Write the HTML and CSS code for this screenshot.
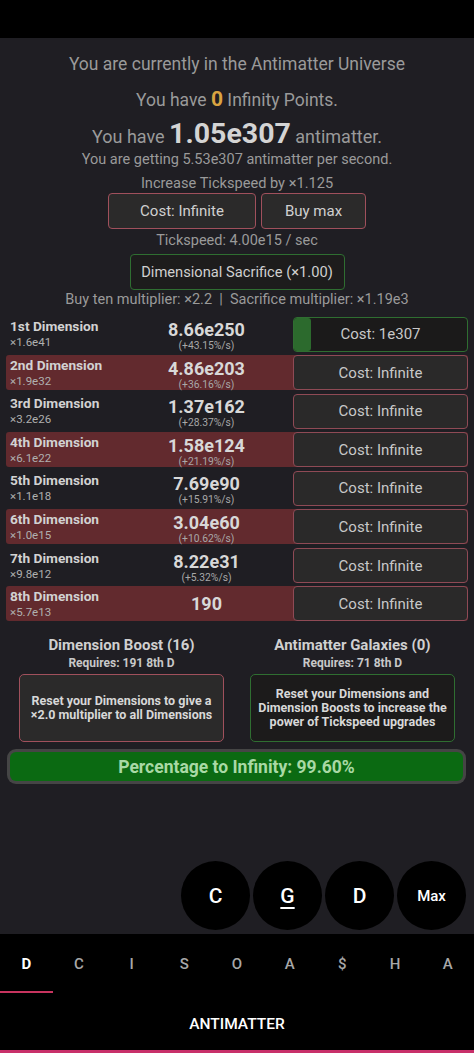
FILE: index.html
```html
<!DOCTYPE html>
<html>
<head>
<meta charset="utf-8">
<link rel="stylesheet" href="styles.css">
</head>
<body>
<div class="status"></div>
<div class="main">
  <div class="line l1">You are currently in the Antimatter Universe</div>
  <div class="line l2">You have <span class="ip">0</span> Infinity Points.</div>
  <div class="line l3">You have <span class="am">1.05e307</span> antimatter.</div>
  <div class="line l4">You are getting 5.53e307 antimatter per second.</div>
  <div class="line l5">Increase Tickspeed by ×1.125</div>
  <div class="tickrow">
    <div class="btn red-b cost">Cost: Infinite</div>
    <div class="btn red-b buymax">Buy max</div>
  </div>
  <div class="line l6">Tickspeed: 4.00e15 / sec</div>
  <div class="btn green-b sac">Dimensional Sacrifice (×1.00)</div>
  <div class="line l7">Buy ten multiplier: ×2.2 &nbsp;|&nbsp; Sacrifice multiplier: ×1.19e3</div>

  <div class="dims">
    <div class="dim">
      <div class="name"><div class="dname">1st Dimension</div><div class="dmult">×1.6e41</div></div>
      <div class="amt"><div class="anum">8.66e250</div><div class="apct">(+43.15%/s)</div></div>
      <div class="dbtn first"><span class="fill"></span>Cost: 1e307</div>
    </div>
    <div class="dim red">
      <div class="name"><div class="dname">2nd Dimension</div><div class="dmult">×1.9e32</div></div>
      <div class="amt"><div class="anum">4.86e203</div><div class="apct">(+36.16%/s)</div></div>
      <div class="dbtn">Cost: Infinite</div>
    </div>
    <div class="dim">
      <div class="name"><div class="dname">3rd Dimension</div><div class="dmult">×3.2e26</div></div>
      <div class="amt"><div class="anum">1.37e162</div><div class="apct">(+28.37%/s)</div></div>
      <div class="dbtn">Cost: Infinite</div>
    </div>
    <div class="dim red">
      <div class="name"><div class="dname">4th Dimension</div><div class="dmult">×6.1e22</div></div>
      <div class="amt"><div class="anum">1.58e124</div><div class="apct">(+21.19%/s)</div></div>
      <div class="dbtn">Cost: Infinite</div>
    </div>
    <div class="dim">
      <div class="name"><div class="dname">5th Dimension</div><div class="dmult">×1.1e18</div></div>
      <div class="amt"><div class="anum">7.69e90</div><div class="apct">(+15.91%/s)</div></div>
      <div class="dbtn">Cost: Infinite</div>
    </div>
    <div class="dim red">
      <div class="name"><div class="dname">6th Dimension</div><div class="dmult">×1.0e15</div></div>
      <div class="amt"><div class="anum">3.04e60</div><div class="apct">(+10.62%/s)</div></div>
      <div class="dbtn">Cost: Infinite</div>
    </div>
    <div class="dim">
      <div class="name"><div class="dname">7th Dimension</div><div class="dmult">×9.8e12</div></div>
      <div class="amt"><div class="anum">8.22e31</div><div class="apct">(+5.32%/s)</div></div>
      <div class="dbtn">Cost: Infinite</div>
    </div>
    <div class="dim red">
      <div class="name"><div class="dname">8th Dimension</div><div class="dmult">×5.7e13</div></div>
      <div class="amt single"><div class="anum">190</div></div>
      <div class="dbtn">Cost: Infinite</div>
    </div>
  </div>

  <div class="resets">
    <div class="rcol">
      <div class="rtitle">Dimension Boost (16)</div>
      <div class="rreq">Requires: 191 8th D</div>
      <div class="rbtn red-b">Reset your Dimensions to give a<br>×2.0 multiplier to all Dimensions</div>
    </div>
    <div class="rcol">
      <div class="rtitle">Antimatter Galaxies (0)</div>
      <div class="rreq">Requires: 71 8th D</div>
      <div class="rbtn green-b dark">Reset your Dimensions and<br>Dimension Boosts to increase the<br>power of Tickspeed upgrades</div>
    </div>
  </div>

  <div class="progress"><div class="pbar">Percentage to Infinity: 99.60%</div></div>

  <div class="rounds">
    <div class="round">C</div>
    <div class="round"><span class="ul">G</span></div>
    <div class="round">D</div>
    <div class="round small">Max</div>
  </div>
</div>
<div class="nav">
  <div class="tabs">
    <div class="tab active">D</div>
    <div class="tab">C</div>
    <div class="tab">I</div>
    <div class="tab">S</div>
    <div class="tab">O</div>
    <div class="tab">A</div>
    <div class="tab">$</div>
    <div class="tab">H</div>
    <div class="tab">A</div>
  </div>
  <div class="label">ANTIMATTER</div>
  <div class="pink"></div>
</div>
</body>
</html>
```
FILE: styles.css
```css
* { box-sizing: border-box; margin: 0; padding: 0; }
body {
  width: 474px;
  height: 1053px;
  background: #1f1e23;
  font-family: Roboto, "Noto Sans", sans-serif;
  color: #9a9a9a;
  overflow: hidden;
  display: flex;
  flex-direction: column;
}
.status { height: 38px; background: #000; flex: none; }
.main { flex: 1; display: flex; flex-direction: column; align-items: center; }
.line { text-align: center; white-space: nowrap; }
.l1 { margin-top: 14px; font-size: 17.5px; line-height: 24px; }
.l2 { margin-top: 11px; font-size: 17.5px; line-height: 24px; height: 24px; }
.ip { color: #d9a441; font-weight: 700; font-size: 21px; }
.l3 { margin-top: 7px; font-size: 18px; line-height: 32px; height: 32px; }
.am { font-size: 28.5px; font-weight: 700; color: #d4d4d4; }
.l4 { font-size: 14.5px; line-height: 20px; }
.l5 { margin-top: 3px; font-size: 14.6px; line-height: 20px; }
.l6 { margin-top: 2px; font-size: 14.5px; line-height: 20px; }
.l7 { margin-top: 1px; font-size: 14.5px; line-height: 18px; }

.btn {
  background: #2b2a2a;
  border: 1px solid #a0505c;
  border-radius: 4px;
  color: #d0d0d0;
  font-size: 15px;
  display: flex;
  align-items: center;
  justify-content: center;
}
.red-b { border-color: #a0505c; }
.green-b { border-color: #2f6e31; }
.tickrow { display: flex; gap: 5px; height: 36px; }
.cost { width: 148px; }
.buymax { width: 105px; }
.sac { margin-top: 3px; width: 215px; height: 36px; background: #1d1c1c; font-size: 14.7px; }

.dims {
  align-self: stretch;
  margin: 7px 6px 0;
  display: flex;
  flex-direction: column;
  gap: 3.6px;
}
.dim {
  height: 35px;
  display: grid;
  grid-template-columns: 114px 173px 175px;
  align-items: center;
}
.dim.red { background: #622a2e; border-radius: 3px; }
.name { padding-left: 4px; align-self: start; padding-top: 2px; }
.dname { font-size: 13.7px; font-weight: 700; color: #d2d2d2; line-height: 17px; }
.dmult { font-size: 11.5px; color: #b0b0b0; line-height: 15px; }
.amt { text-align: center; align-self: start; padding-top: 3px; }
.amt.single { align-self: center; padding-top: 0; }
.anum { font-size: 18px; font-weight: 700; color: #d8d8d8; line-height: 21px; }
.apct { font-size: 10.3px; color: #a8a8a8; line-height: 12px; }
.dbtn {
  position: relative;
  height: 35px;
  background: #2a2929;
  border: 1px solid #8f4a55;
  border-radius: 4px;
  color: #c8c8c8;
  font-size: 15px;
  display: flex;
  align-items: center;
  justify-content: center;
  overflow: hidden;
}
.dbtn.first { background: #1b1a1a; border-color: #2f6e31; }
.fill {
  position: absolute;
  left: 0; top: 0; bottom: 0;
  width: 17px;
  background: #2c6a2d;
  border-radius: 0 3px 3px 0;
}

.resets {
  align-self: stretch;
  margin: 15px 6px 0;
  display: grid;
  grid-template-columns: 1fr 1fr;
}
.rcol { display: flex; flex-direction: column; align-items: center; }
.rtitle { font-size: 15px; font-weight: 700; color: #d0d0d0; line-height: 18px; }
.rreq { margin-top: 2px; font-size: 12px; font-weight: 700; color: #c8c8c8; line-height: 14px; }
.rbtn {
  margin-top: 4px;
  width: 205px;
  height: 68px;
  background: #2b2a2a;
  border: 1px solid #a0505c;
  border-radius: 5px;
  color: #d8d8d8;
  font-size: 12.5px;
  font-weight: 700;
  line-height: 14px;
  text-align: center;
  display: flex;
  align-items: center;
  justify-content: center;
}
.rbtn.green-b { border-color: #2f6e31; }
.rbtn.dark { background: #1c1b1b; }

.progress {
  align-self: stretch;
  margin: 7px 8px 0 7px;
  height: 35px;
  background: #454545;
  border-radius: 9px;
  padding: 3px;
}
.pbar {
  height: 100%;
  background: #0b6a12;
  border-radius: 6px;
  color: #a9d9a5;
  font-size: 17.5px;
  font-weight: 700;
  display: flex;
  align-items: center;
  justify-content: center;
}

.rounds {
  align-self: stretch;
  margin-top: 77px;
  padding-right: 8px;
  display: flex;
  justify-content: flex-end;
  gap: 3px;
}
.round {
  width: 69px;
  height: 69px;
  border-radius: 50%;
  background: #000;
  color: #fff;
  font-size: 21px;
  font-weight: 500;
  display: flex;
  align-items: center;
  justify-content: center;
}
.round.small { font-size: 15px; }
.ul { text-decoration: underline; text-underline-offset: 4px; text-decoration-thickness: 2px; }

.nav { height: 119px; flex: none; background: #000; display: flex; flex-direction: column; }
.tabs { display: flex; height: 59px; }
.tab {
  flex: 1;
  text-align: center;
  padding-top: 4px;
  line-height: 53px;
  font-size: 15px;
  font-weight: 500;
  color: #a8a8a8;
  border-bottom: 2px solid transparent;
}
.tab.active { color: #fff; font-weight: 700; border-bottom-color: #c8345f; }
.label {
  flex: 1;
  text-align: center;
  padding-top: 5px;
  line-height: 52px;
  font-size: 15.5px;
  font-weight: 500;
  color: #fff;
}
.pink { height: 3px; background: #c8306a; }
```
